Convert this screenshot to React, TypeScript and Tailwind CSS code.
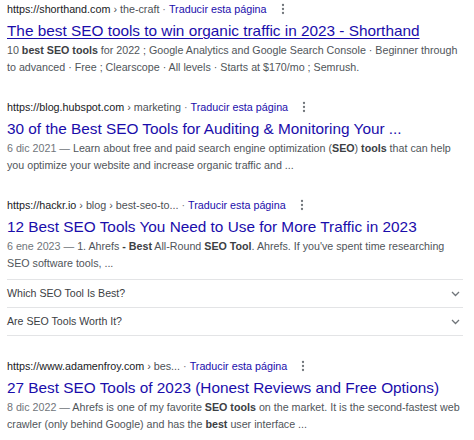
import React from "react";

const Dots = () => (
  <svg width="4" height="12" viewBox="0 0 4 12" className="ml-[14px] shrink-0">
    <circle cx="2" cy="2" r="1.15" fill="#70757a" />
    <circle cx="2" cy="6" r="1.15" fill="#70757a" />
    <circle cx="2" cy="10" r="1.15" fill="#70757a" />
  </svg>
);

const Chevron = () => (
  <svg width="9" height="6" viewBox="0 0 9 6" className="shrink-0">
    <path d="M1 1l3.5 3.5L8 1" stroke="#70757a" strokeWidth="1.3" fill="none" />
  </svg>
);

function UrlRow({ host, path }: { host: string; path: string }) {
  return (
    <div className="flex h-[18px] items-center whitespace-nowrap text-[10.75px] leading-[18px]">
      <span className="text-[#202124]">{host}</span>
      <span className="text-[#4d5156]">&nbsp;{path}</span>
      <span className="text-[#70757a]">&nbsp;·&nbsp;</span>
      <span className="text-[#1a0dab]">Traducir esta página</span>
      <Dots />
    </div>
  );
}

const B = ({ children }: { children: React.ReactNode }) => (
  <b className="font-bold text-[#3c4043]">{children}</b>
);
const D = ({ children }: { children: React.ReactNode }) => (
  <span className="text-[#70757a]">{children}</span>
);

function Result({
  host,
  path,
  title,
  underline,
  lines,
  className,
}: {
  host: string;
  path: string;
  title: string;
  underline?: boolean;
  lines: React.ReactNode[];
  className?: string;
}) {
  return (
    <div className={className}>
      <UrlRow host={host} path={path} />
      <div
        className={
          "mt-[2px] whitespace-nowrap text-[15.35px] leading-[22px] text-[#1a0dab] " +
          (underline ? "underline decoration-1 underline-offset-[2px]" : "")
        }
      >
        {title}
      </div>
      <div className="text-[10.7px] leading-[17px] text-[#50555a]">
        {lines.map((l, i) => (
          <div key={i} className="whitespace-nowrap">
            {l}
          </div>
        ))}
      </div>
    </div>
  );
}

export default function App() {
  return (
    <div className="h-[440px] w-[474px] overflow-hidden bg-white pl-[7px] pr-[11px] font-['Liberation_Sans',Arial,sans-serif]">
      <Result
        host="https://shorthand.com"
        path="› the-craft"
        title="The best SEO tools to win organic traffic in 2023 - Shorthand"
        underline
        lines={[
          <>
            10 <B>best SEO tools</B> for 2022 ; Google Analytics and Google Search Console · Beginner through
          </>,
          <>to advanced · Free ; Clearscope · All levels · Starts at $170/mo ; Semrush.</>,
        ]}
      />
      <Result
        className="mt-[22px]"
        host="https://blog.hubspot.com"
        path="› marketing"
        title="30 of the Best SEO Tools for Auditing & Monitoring Your ..."
        lines={[
          <>
            <D>6 dic 2021 — </D>Learn about free and paid search engine optimization (<B>SEO</B>) <B>tools</B> that can help
          </>,
          <>you optimize your website and increase organic traffic and ...</>,
        ]}
      />
      <Result
        className="mt-[22px]"
        host="https://hackr.io"
        path="› blog › best-seo-to..."
        title="12 Best SEO Tools You Need to Use for More Traffic in 2023"
        lines={[
          <>
            <D>6 ene 2023 — </D>1. Ahrefs <B>- Best</B> All-Round <B>SEO Tool</B>. Ahrefs. If you've spent time researching
          </>,
          <>SEO software tools, ...</>,
        ]}
      />
      <div className="mt-[7px] border-t border-[#e3e4e6]">
        {["Which SEO Tool Is Best?", "Are SEO Tools Worth It?"].map((q) => (
          <div
            key={q}
            className="flex h-[28px] items-center justify-between border-b border-[#e3e4e6] pr-[3px] text-[10.6px] text-[#3c4043]"
          >
            <span>{q}</span>
            <Chevron />
          </div>
        ))}
      </div>
      <Result
        className="mt-[21px]"
        host="https://www.adamenfroy.com"
        path="› bes..."
        title="27 Best SEO Tools of 2023 (Honest Reviews and Free Options)"
        lines={[
          <>
            <D>8 dic 2022 — </D>Ahrefs is one of my favorite <B>SEO tools</B> on the market. It is the second-fastest web
          </>,
          <>
            crawler (only behind Google) and has the <B>best</B> user interface ...
          </>,
        ]}
      />
    </div>
  );
}
